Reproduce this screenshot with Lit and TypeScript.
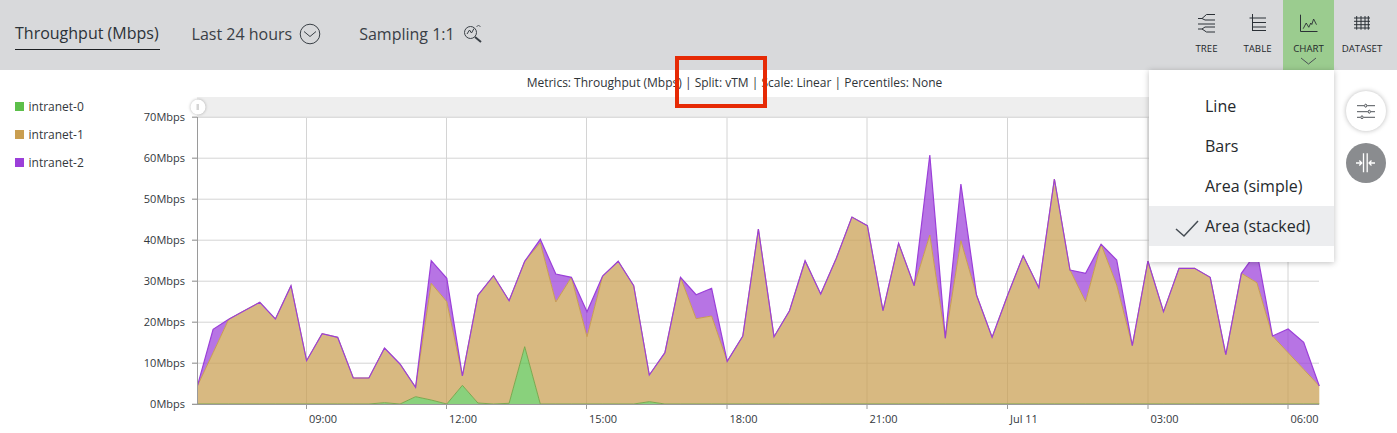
import { LitElement, html, css, svg } from "lit";
import { customElement } from "lit/decorators.js";

const X0 = 197.5, DX = 15.58, BASE = 404;
// Values below are read in reference zoom units: screen y = 220 + v / 3.
const TOP = [497,328,298,272,247,297,197,422,341,352,474,474,384,432,502,122,175,468,226,167,242,124,58,162,172,275,168,124,197,465,398,172,224,205,424,348,27,350,272,122,222,115,-9,17,272,70,197,-195,355,-108,225,352,225,107,203,-123,150,160,73,120,377,123,275,145,145,172,404,160,95,348,327,367,498];
const TAN = TOP.slice();
const tanOverrides: Record<number, number> = {0:497,1:398,15:190,16:245,22:68,23:246,25:350,32:296,33:288,47:45,49:62,57:245,59:195,68:188,70:398,71:448};
for (const k in tanOverrides) TAN[+k] = tanOverrides[+k];
const GREEN = TOP.map(() => 552);
const greenOverrides: Record<number, number> = {12:548,14:530,15:540,17:496,18:549,20:550,21:380,29:545};
for (const k in greenOverrides) GREEN[+k] = greenOverrides[+k];

const px = (i: number) => X0 + i * DX;
const py = (v: number) => Math.min(220 + v / 3, BASE);
const line = (a: number[]) => a.map((v, i) => `${px(i).toFixed(1)},${py(v).toFixed(1)}`).join(" ");
const band = (hi: number[], lo: number[]) =>
  line(hi) + " " + lo.map((v, i) => `${px(i).toFixed(1)},${py(v).toFixed(1)}`).reverse().join(" ");
const ZERO = TOP.map(() => 552);

const Y_LABELS = [70, 60, 50, 40, 30, 20, 10, 0];
const yOf = (m: number) => 404 - m * 4.1;
const TICKS: [number, string][] = [[306.5,"09:00"],[446.5,"12:00"],[586.5,"15:00"],[727,"18:00"],[867,"21:00"],[1007.5,"Jul 11"],[1148,"03:00"],[1288,"06:00"]];

@customElement("app-root")
export class AppRoot extends LitElement {
  static styles = css`
    :host { display: block; position: relative; width: 1397px; height: 433px; overflow: hidden; background: #fff; font-family: "Open Sans", "Liberation Sans", sans-serif; color: #33383d; }
    svg { display: block; }
    .header { height: 70px; background: #d8d9db; display: flex; align-items: stretch; justify-content: space-between; box-sizing: border-box; padding: 0 7px 0 15px; }
    .left { display: flex; align-items: center; font-size: 16px; color: #3a4046; }
    .active { color: #2c3238; border-bottom: 1px solid #1c1f22; padding: 0 1px 5px 0; margin-top: 2px; line-height: 22px; }
    .range { display: flex; align-items: center; margin: 0 0 2px 32px; gap: 7px; }
    .sampling { display: flex; align-items: center; margin: 0 0 2px 38px; gap: 9px; }
    .tabs { display: flex; }
    .tab { width: 51px; display: flex; flex-direction: column; align-items: center; font-size: 9.7px; color: #24282c; padding-top: 13px; box-sizing: border-box; position: relative; }
    .tab svg { width: 20px; height: 20px; }
    .tab span { margin-top: 9px; line-height: 13px; }
    .tab.wide { width: 56px; }
    .tab.on { background: #9bcc8f; }
    .chev { position: absolute; left: 17px; bottom: 5px; }
    .tab.on svg.chev { width: 17px; height: 8px; }
    .body { display: flex; height: 363px; }
    .legend { width: 130px; box-sizing: border-box; padding: 27px 0 0 15px; font-size: 12px; color: #33383d; display: flex; flex-direction: column; gap: 10px; }
    .lg { display: flex; align-items: center; gap: 4.5px; height: 18px; }
    .sw { width: 9px; height: 9px; margin-top: 1px; }
    .s0 { background: #5cbf4a; } .s1 { background: #c99e50; } .s2 { background: #9b3fd9; }
    .chart { width: 1209px; }
    .title { height: 27px; line-height: 25px; text-align: center; font-size: 12px; color: #2f3438; }
    .rail { flex: 1; display: flex; flex-direction: column; gap: 12px; padding: 21px 0 0 7px; }
    .fab { width: 40px; height: 40px; border-radius: 50%; display: flex; align-items: center; justify-content: center; box-shadow: 0 0 5px rgba(0,0,0,.28); background: #fff; }
    .fab.dark { background: #8a8c8f; box-shadow: none; }
    .grid { stroke: #d4d4d4; stroke-width: 1; }
    .axis { stroke: #9a9a9a; stroke-width: 1; }
    .lbl { font-size: 11px; fill: #33383d; font-family: "Open Sans", sans-serif; }
    .knob { fill: #fff; filter: drop-shadow(0 0 1.5px rgba(0,0,0,.3)); }
    .menu { position: absolute; left: 1149px; top: 70px; width: 185px; box-sizing: border-box; padding: 16px 0; background: #fff; box-shadow: 0 1px 6px rgba(0,0,0,.25); font-size: 16px; color: #25292d; }
    .item { height: 40px; line-height: 40px; padding-left: 56px; position: relative; }
    .item.sel { background: #ecedef; }
    .check { position: absolute; left: 26px; top: 14px; }
    .mark { position: absolute; left: 675px; top: 56px; width: 92px; height: 52px; box-sizing: border-box; border: 4.5px solid #e62a05; }
  `;

  private tree() {
    return html`<svg viewBox="0 0 20 20" fill="none" stroke="#2b3036" stroke-width="1"><path d="M1 5.500h4L9.500 1.500H18M5 5.500l3 1.500h10M1 11H18M1 16h4l4.500 3H18M5 16l3-2h10"/></svg>`;
  }
  private table() {
    return html`<svg viewBox="0 0 20 20" fill="none" stroke="#2b3036" stroke-width="1"><path d="M4.500 1v17M1.500 5H18M4.500 9.500H18M4.500 14H18M4.500 17.500H18"/></svg>`;
  }
  private chartIcon() {
    return html`<svg viewBox="0 0 20 20" fill="none" stroke="#2b3036" stroke-width="1"><path d="M1.500 1.700v16.800h17"/><path stroke-width=".9" d="M4.200 15.700L7.200 10l2.600 4.300 2-4.300 1 1.500 1.800-5.500 2.900 5.700"/></svg>`;
  }
  private dataset() {
    return html`<svg viewBox="0 0 20 20" fill="none" stroke="#2b3036" stroke-width="1"><path d="M4.700 3v13.700M9 3v13.700M13 3v13.700M16.300 3v13.700M2 5h16M2 8.300h16M2 11.700h16M2 15h16"/></svg>`;
  }

  render() {
    return html`
      <div class="header">
        <div class="left">
          <div class="active">Throughput (Mbps)</div>
          <div class="range">Last 24 hours
            <svg width="22" height="22" viewBox="0 0 22 22" fill="none" stroke="#3a4046" stroke-width="1"><circle cx="11" cy="11" r="9.800"/><path d="M5 8.500l6 5 6-5"/></svg>
          </div>
          <div class="sampling">Sampling 1:1
            <svg width="20" height="20" viewBox="0 0 20 20" fill="none" stroke="#3a4046" stroke-width="1"><circle cx="6.500" cy="8.500" r="6"/><path d="M11 13l6 5" stroke-width="2"/><path d="M3 10l2.500-4 2 3 2.500-4.500"/><path d="M12.500 3l2-2 2 2" stroke-width=".8"/></svg>
          </div>
        </div>
        <div class="tabs">
          <div class="tab">${this.tree()}<span>TREE</span></div>
          <div class="tab">${this.table()}<span>TABLE</span></div>
          <div class="tab on">${this.chartIcon()}<span>CHART</span>
            <svg class="chev" viewBox="0 0 17 8" fill="none" stroke="#4a5056" stroke-width="1"><path d="M1 1l7.500 6L16 1"/></svg>
          </div>
          <div class="tab wide">${this.dataset()}<span>DATASET</span></div>
        </div>
      </div>
      <div class="body">
        <div class="legend">
          <div class="lg"><i class="sw s0"></i>intranet-0</div>
          <div class="lg"><i class="sw s1"></i>intranet-1</div>
          <div class="lg"><i class="sw s2"></i>intranet-2</div>
        </div>
        <div class="chart">
          <div class="title">Metrics: Throughput (Mbps) | Split: vTM | Scale: Linear | Percentiles: None</div>
          <svg width="1209" height="336" viewBox="130 97 1209 336">
            <rect x="197" y="97" width="1122" height="21" fill="#eeeeee"/>
            ${Y_LABELS.slice(0, 7).map(m => svg`<line class="grid" x1="192" x2="1319" y1=${yOf(m) + 0.2} y2=${yOf(m) + 0.2}/>`)}
            ${TICKS.map(([x]) => svg`<line class="grid" x1=${x} x2=${x} y1="118" y2="404"/>`)}
            <polygon points=${band(GREEN, ZERO)} fill="#5cbf4a" fill-opacity=".72"/>
            <polygon points=${band(TAN, GREEN)} fill="#c99e50" fill-opacity=".72"/>
            <polygon points=${band(TOP, TAN)} fill="#9b3fd9" fill-opacity=".72"/>
            <polyline points=${line(GREEN)} fill="none" stroke="#7aa94e" stroke-width="1"/>
            <polyline points=${line(TAN)} fill="none" stroke="#c99e50" stroke-width="1"/>
            <polyline points=${line(TOP)} fill="none" stroke="#9b3fd9" stroke-width="1.200"/>
            <line class="axis" x1="197.500" x2="197.500" y1="117" y2="404"/>
            <line class="axis" x1="192" x2="1319" y1="404.500" y2="404.500"/>
            ${Y_LABELS.map(m => svg`<line class="axis" x1="192" x2="197" y1=${yOf(m) + 0.2} y2=${yOf(m) + 0.2}/>
              <text class="lbl" x="185" y=${yOf(m) + 4} text-anchor="end">${m}Mbps</text>`)}
            ${TICKS.map(([x, t]) => svg`<line class="axis" x1=${x} x2=${x} y1="404" y2="409"/>
              <text class="lbl" x=${x + 2.5} y="423">${t}</text>`)}
            <circle class="knob" cx="198" cy="107" r="7.500"/>
            <rect x="196.500" y="104" width="2.500" height="6" fill="#d5d5d5"/>
          </svg>
        </div>
        <div class="rail">
          <div class="fab">
            <svg width="20" height="16" viewBox="0 0 20 16" fill="none" stroke="#3c4146" stroke-width=".9"><path d="M1 2.700h7.200M11.200 2.700H19M1 8.700h10.800M14.800 8.700H19M1 14.300h3.500M7.500 14.300H19"/><ellipse cx="9.700" cy="2.700" rx="1.100" ry="1.500"/><ellipse cx="13.300" cy="8.700" rx="1.100" ry="1.500"/><ellipse cx="6" cy="14.300" rx="1.100" ry="1.500"/></svg>
          </div>
          <div class="fab dark">
            <svg width="24" height="22" viewBox="0 0 24 22" fill="none" stroke="#fff" stroke-width="1.300"><path d="M9.500 1.300v19M13.200 1.300v19"/><path d="M2 11h5.800M5.300 8.500L7.800 11l-2.500 2.500M21 11h-6M17.500 8.500L15 11l2.500 2.500"/></svg>
          </div>
        </div>
      </div>
      <div class="menu">
        <div class="item">Line</div>
        <div class="item">Bars</div>
        <div class="item">Area (simple)</div>
        <div class="item sel">
          <svg class="check" width="24" height="18" viewBox="0 0 24 18" fill="none" stroke="#454c53" stroke-width="1.500"><path d="M1 9l8 7L23 1"/></svg>
          Area (stacked)
        </div>
      </div>
      <div class="mark"></div>
    `;
  }
}
